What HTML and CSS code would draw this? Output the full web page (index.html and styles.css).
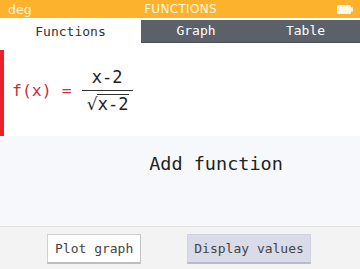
FILE: index.html
```html
<!DOCTYPE html>
<html>
<head>
<meta charset="utf-8">
<link rel="stylesheet" href="styles.css">
</head>
<body>
<div class="screen">
  <div class="topbar">
    <span class="deg">deg</span>
    <span class="title">FUNCTIONS</span>
    <span class="battery"><svg width="16" height="9" viewBox="0 0 16 9"><rect x="0" y="0" width="14" height="9" rx="1.5" fill="#fff8e8"/><rect x="14" y="2.5" width="2" height="4" fill="#fff8e8"/></svg></span>
  </div>
  <div class="tabs">
    <div class="tab active">Functions</div>
    <div class="tab">Graph</div>
    <div class="tab">Table</div>
  </div>
  <div class="list">
    <div class="row func">
      <div class="marker"></div>
      <div class="expr">
        <span class="name">f(x) =</span>
        <span class="frac">
          <span class="num">x-2</span>
          <span class="den"><span class="rad">√</span><span class="radicand">x-2</span></span>
        </span>
      </div>
    </div>
    <div class="row add">Add function</div>
  </div>
  <div class="bottom">
    <div class="btn">Plot graph</div>
    <div class="btn alt">Display values</div>
  </div>
</div>
</body>
</html>
```

FILE: styles.css
```css
* { box-sizing: border-box; }
html, body { margin: 0; padding: 0; }
body { width: 360px; height: 269px; overflow: hidden; background: #fff; font-family: "DejaVu Sans Mono", "Liberation Mono", monospace; }
.screen { width: 360px; height: 269px; display: flex; flex-direction: column; }
.topbar { height: 18px; background: #fdb22e; display: flex; align-items: center; padding: 0 7px 0 8px; color: #fff6e0; font-family: "DejaVu Sans", sans-serif; }
.deg { font-size: 12.5px; width: 60px; }
.title { flex: 1; text-align: center; font-size: 12px; letter-spacing: 0.3px; padding-right: 44px; }
.battery { width: 16px; height: 9px; display: flex; }
.tabs { height: 25px; display: flex; background: #fff; padding-top: 2px; }
.tab { flex: 0 0 110px; color: #fff; font-size: 13px; display: flex; align-items: center; justify-content: center; background: #5c6169; border-bottom: 1px solid #4a4e55; padding-bottom: 1px; }
.tab.active { flex-basis: 141px; background: #fff; color: #333; border-bottom: none; }
.tab:last-child { flex-basis: 109px; }
.list { flex: 1; display: flex; flex-direction: column; }
.row.func { height: 93px; background: #fff; display: flex; align-items: center; padding-top: 1px; }
.marker { width: 4px; height: 86px; background: #e8212a; align-self: flex-start; margin-top: 6px; }
.expr { display: flex; align-items: center; margin-left: 8px; }
.name { color: #c4313a; font-size: 16.5px; margin-right: 10px; margin-top: 1px; }
.frac { display: flex; flex-direction: column; align-items: center; font-size: 17px; color: #222; }
.num { padding-bottom: 4px; border-bottom: 1px solid #333; width: 51px; text-align: center; line-height: 18px; }
.den { display: flex; align-items: flex-end; line-height: 18px; padding-top: 3px; margin-left: 2px; }
.rad { font-family: "DejaVu Sans", sans-serif; font-size: 17px; margin-right: -1px; }
.radicand { border-top: 1px solid #333; padding: 0 1px; }
.row.add { height: 90px; background: #f6f8fc; display: flex; align-items: flex-start; justify-content: center; padding-left: 72px; padding-top: 17px; font-size: 18.5px; color: #222; }
.bottom { height: 43px; background: #f3f3f3; border-top: 1px solid #e2e2e2; display: flex; align-items: center; padding-left: 47px; padding-top: 2px; gap: 46px; }
.btn { height: 30px; padding: 0 7px; display: flex; align-items: center; font-size: 13px; color: #444; background: #fff; border: 1px solid #cfcfcf; border-bottom: 2px solid #bdbdbd; border-right-color: #c4c4c4; }
.btn.alt { background: #d9dbe9; border-color: #d0d2e0; border-bottom-color: #b9bbcb; padding: 0 6px; }
```
